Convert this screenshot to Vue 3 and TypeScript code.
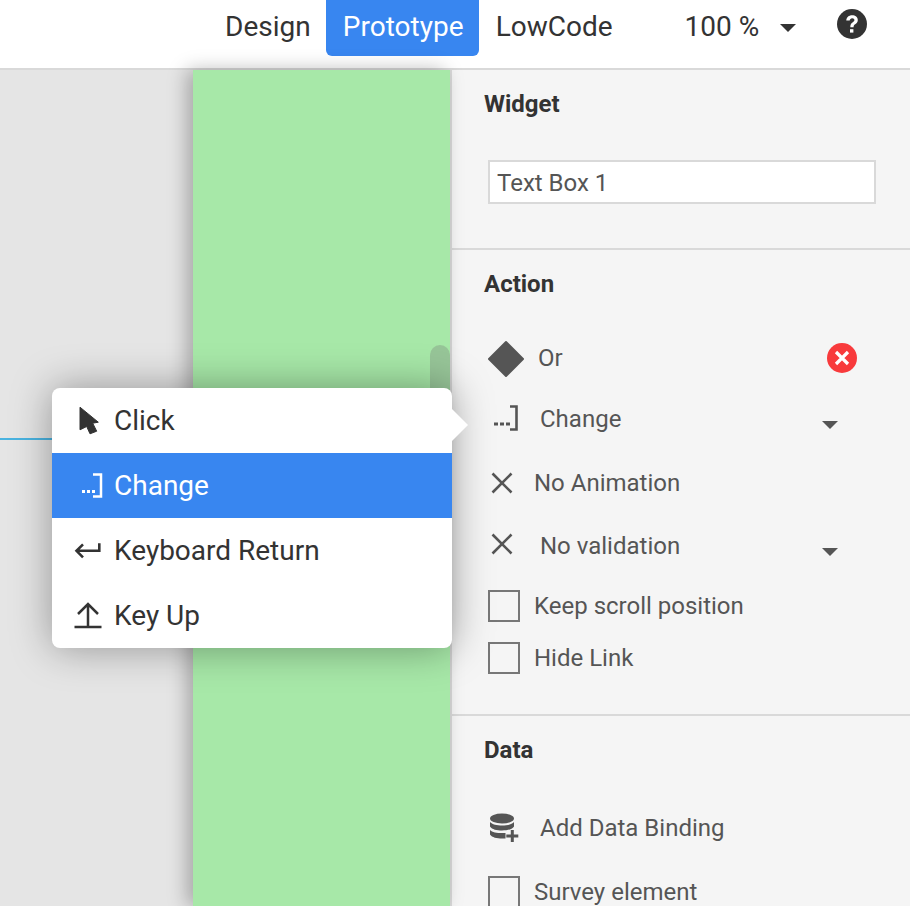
<script setup lang="ts">
const menu = [
  { id: 'click', label: 'Click' },
  { id: 'change', label: 'Change' },
  { id: 'return', label: 'Keyboard Return' },
  { id: 'up', label: 'Key Up' },
]
</script>

<template>
  <div class="app">
    <header class="top">
      <span class="tab t1">Design</span>
      <span class="tab active">Prototype</span>
      <span class="tab t3">LowCode</span>
      <span class="zoom">100 %</span>
      <span class="caret top-caret"></span>
      <svg class="help" viewBox="0 0 30 30" width="30" height="30">
        <circle cx="15" cy="15" r="15" fill="#333" />
        <path d="M9.300 11.600c0-3.300 2.500-5.400 5.800-5.400 3.300 0 5.700 2 5.700 4.800 0 2.100-1.100 3.200-2.600 4.300-1.300.9-1.600 1.400-1.600 2.900h-3.300c0-2.500.7-3.600 2.200-4.700 1.300-.9 1.900-1.500 1.900-2.500 0-1.100-.9-1.800-2.200-1.800-1.400 0-2.400.9-2.500 2.400z" fill="#fff" />
        <rect x="13" y="20.200" width="3.400" height="3.400" fill="#fff" />
      </svg>
    </header>
    <main class="body">
      <div class="canvas">
        <div class="page"></div>
        <div class="thumb"></div>
        <div class="wire"></div>
        <div class="menu">
          <div v-for="m in menu" :key="m.id" class="item" :class="{ sel: m.id === 'change' }">
            <span class="item-icon">
              <svg v-if="m.id === 'click'" viewBox="0 0 30 30" width="30" height="30">
                <path d="M6 1.200V23.800L12.700 20.500 16 27.800 22.700 25.200 18.700 17.200 24.300 16.200Z" fill="#333" stroke="#333" stroke-linejoin="round" />
              </svg>
              <svg v-else-if="m.id === 'change'" viewBox="0 0 30 30" width="30" height="30">
                <path d="M19 3.500H27V25.500H19" fill="none" stroke="currentColor" stroke-width="2.500" />
                <path d="M8 20.500H11M13 20.500H16M18 20.500H21" fill="none" stroke="currentColor" stroke-width="2.800" />
              </svg>
              <svg v-else-if="m.id === 'return'" viewBox="0 0 30 30" width="30" height="30">
                <path d="M25.300 7.200V14.800H2.500M9 8.300 2.500 14.800 9 21.300" fill="none" stroke="#333" stroke-width="2.600" />
              </svg>
              <svg v-else viewBox="0 0 30 30" width="30" height="30">
                <path d="M.5 26H27.500M14 25V4M4 13 14 3 24 13" fill="none" stroke="#333" stroke-width="2.500" />
              </svg>
            </span>
            <span>{{ m.label }}</span>
          </div>
          <div class="arrow"></div>
        </div>
      </div>
      <aside class="panel">
        <section class="sec widget">
          <h3>Widget</h3>
          <input class="field" value="Text Box 1" />
        </section>
        <section class="sec action">
          <h3>Action</h3>
          <div class="row or">
            <svg class="ic-diamond" viewBox="0 0 38 38" width="38" height="38">
              <path d="M19 2 36 19 19 36 2 19Z" fill="#555" stroke="#555" stroke-width="2" stroke-linejoin="round" />
            </svg>
            <span class="or-label">Or</span>
            <svg class="ic-del" viewBox="0 0 30 30" width="30" height="30">
              <circle cx="15" cy="15" r="15" fill="#f83a3c" />
              <path d="M9 9 21 21M21 9 9 21" stroke="#fff" stroke-width="3.200" />
            </svg>
          </div>
          <div class="row change">
            <svg class="ic-change" viewBox="0 0 26 26" width="26" height="26">
              <path d="M17 1.500H23.500V24.500H17" fill="none" stroke="#555" stroke-width="2.600" />
              <path d="M1 19H5M7 19H11M13 19H17" fill="none" stroke="#555" stroke-width="2.800" />
            </svg>
            <span class="label-far">Change</span>
            <span class="caret row-caret"></span>
          </div>
          <div class="row anim">
            <svg class="ic-x" viewBox="0 0 22 22" width="22" height="22">
              <path d="M1.500 1.500 20.500 20.500M20.500 1.500 1.500 20.500" stroke="#555" stroke-width="2.600" />
            </svg>
            <span class="label-near">No Animation</span>
          </div>
          <div class="row valid">
            <svg class="ic-x" viewBox="0 0 22 22" width="22" height="22">
              <path d="M1.500 1.500 20.500 20.500M20.500 1.500 1.500 20.500" stroke="#555" stroke-width="2.600" />
            </svg>
            <span class="label-far">No validation</span>
            <span class="caret row-caret"></span>
          </div>
          <div class="row chk first"><span class="box"></span><span>Keep scroll position</span></div>
          <div class="row chk"><span class="box"></span><span>Hide Link</span></div>
        </section>
        <section class="sec data">
          <h3>Data</h3>
          <div class="row bind">
            <svg class="ic-db" viewBox="0 0 30 30" width="30" height="30">
              <ellipse cx="12" cy="5.500" rx="12" ry="5" fill="#555" />
              <path d="M0 9C2 11.500 7 12.500 12 12.500 17 12.500 22 11.500 24 9V13.500C22 16.500 17 17.500 12 17.500 7 17.500 2 16.500 0 13.500Z" fill="#555" />
              <path d="M0 17C2 19.500 7 20 12 20H15.500V25.500H12C7 25.500 2 24.500 0 21.500Z" fill="#555" />
              <path d="M22.300 17V29M16.300 23H28.300" stroke="#555" stroke-width="3" />
            </svg>
            <span class="label-far">Add Data Binding</span>
          </div>
          <div class="row chk survey"><span class="box"></span><span>Survey element</span></div>
        </section>
      </aside>
    </main>
  </div>
</template>

<style>
html, body { margin: 0; padding: 0; overflow: hidden; }
</style>

<style scoped>
.app {
  width: 910px;
  height: 906px;
  overflow: hidden;
  display: flex;
  flex-direction: column;
  font-family: Roboto, "Liberation Sans", sans-serif;
  background: #fff;
}
.top {
  height: 68px;
  flex: none;
  box-sizing: content-box;
  border-bottom: 2px solid #d9d9d9;
  display: flex;
  align-items: flex-start;
  color: #333;
  font-size: 28px;
  background: #fff;
}
.tab {
  height: 56px;
  line-height: 54px;
  border-radius: 0 0 6px 6px;
}
.t1 { margin-left: 225px; }
.active {
  margin-left: 15px;
  width: 153px;
  box-sizing: border-box;
  padding-left: 2px;
  text-align: center;
  background: #3886f0;
  color: #fff;
}
.t3 { margin-left: 17px; }
.zoom { margin-left: 72px; line-height: 54px; }
.caret {
  width: 0;
  height: 0;
  border-left: 8px solid transparent;
  border-right: 8px solid transparent;
  border-top: 8px solid #333;
}
.top-caret { margin-left: 21px; margin-top: 24px; }
.help { margin-left: 41px; margin-top: 9px; }
.body { flex: 1; display: flex; min-height: 0; }
.canvas {
  width: 450px;
  flex: none;
  position: relative;
  background: #e5e5e5;
  overflow: visible;
  z-index: 2;
}
.page {
  position: absolute;
  left: 193px;
  right: 0;
  top: 0;
  bottom: 0;
  background: #a7e8a8;
  box-shadow: -6px 0 18px rgba(0, 0, 0, 0.28);
}
.thumb {
  position: absolute;
  left: 430px;
  top: 275px;
  width: 20px;
  height: 120px;
  border-radius: 10px;
  background: rgba(115, 115, 115, 0.29);
}
.wire {
  position: absolute;
  left: 0;
  top: 368px;
  width: 60px;
  height: 2px;
  background: #4ab3e0;
}
.menu {
  position: absolute;
  left: 52px;
  top: 318px;
  width: 400px;
  background: #fff;
  border-radius: 8px;
  box-shadow: 0 0 40px rgba(0, 0, 0, 0.36);
  color: #333;
  font-size: 28px;
}
.item {
  height: 65px;
  display: flex;
  align-items: center;
  padding-left: 22px;
  line-height: 65px;
}
.item-icon {
  width: 30px;
  height: 30px;
  margin-right: 10px;
  display: flex;
}
.sel { background: #3886f0; color: #fff; }
.arrow {
  position: absolute;
  left: 400px;
  top: 21px;
  width: 0;
  height: 0;
  border-top: 16px solid transparent;
  border-bottom: 16px solid transparent;
  border-left: 16px solid #fff;
}
.panel {
  flex: 1;
  min-width: 0;
  background: #f5f5f5;
  border-left: 2px solid #d9d9d9;
  color: #555;
  font-size: 24px;
}
.sec { padding-left: 32px; border-bottom: 2px solid #d9d9d9; box-sizing: border-box; }
.sec h3 {
  margin: 0;
  color: #333;
  font-size: 24px;
  font-weight: 700;
  line-height: 28px;
}
.widget { height: 180px; padding-top: 20px; }
.field {
  display: block;
  margin: 42px 0 0 4px;
  width: 388px;
  height: 44px;
  box-sizing: border-box;
  border: 2px solid #d9d9d9;
  background: #fff;
  font: 24px Roboto, sans-serif;
  color: #555;
  padding: 2px 7px 0;
  outline: none;
}
.action { height: 466px; padding-top: 20px; }
.data { border-bottom: 0; padding-top: 20px; }
.row { display: flex; align-items: center; position: relative; }
.or { height: 40px; margin-top: 40px; }
.ic-diamond { margin-left: 3px; margin-top: 2px; }
.or-label { margin-left: 13px; }
.ic-del { margin-left: auto; margin-right: 53px; }
.change { height: 40px; margin-top: 21px; }
.ic-change { margin-left: 9px; margin-top: -2px; }
.label-far { margin-left: 22px; }
.change .label-far { margin-left: 21px; }
.row-caret { position: absolute; left: 338px; top: 22px; border-top-color: #555; }
.anim { height: 40px; margin-top: 24px; }
.ic-x { margin-left: 7px; }
.label-near { margin-left: 21px; }
.valid { height: 40px; margin-top: 23px; }
.valid .label-far { margin-left: 27px; }
.valid .ic-x { margin-top: -4px; }
.chk { height: 32px; }
.chk .box {
  width: 32px;
  height: 32px;
  box-sizing: border-box;
  border: 2px solid #777;
  margin: 0 14px 0 4px;
  background: transparent;
}
.first { margin-top: 24px; }
.first + .chk { margin-top: 20px; }
.bind { height: 40px; margin-top: 44px; }
.ic-db { margin-left: 6px; }
.bind .label-far { margin-left: 20px; }
.survey { margin-top: 28px; }
</style>
